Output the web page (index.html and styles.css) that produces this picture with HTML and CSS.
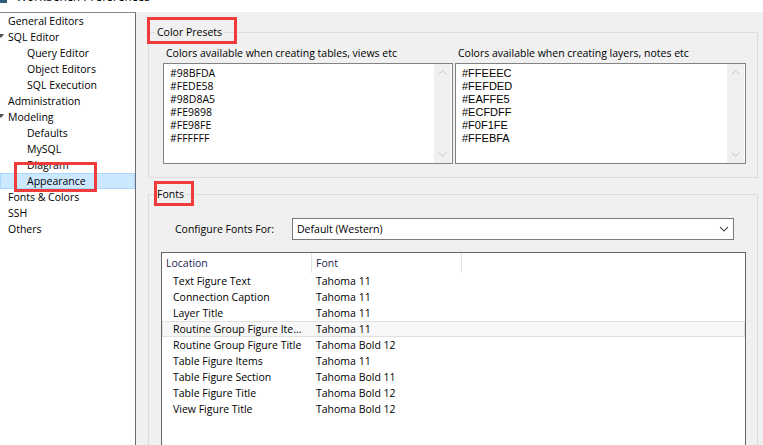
FILE: index.html
```html
<!DOCTYPE html>
<html>
<head>
<meta charset="utf-8">
<title>Workbench Preferences</title>
<link rel="stylesheet" href="styles.css">
</head>
<body>
<div class="titlebar">
  <span class="app-icon"></span>
  <span class="title">Workbench Preferences</span>
</div>
<div class="main">
  <nav class="sidebar">
    <div class="item">General Editors</div>
    <div class="item open"><span class="exp"></span>SQL Editor</div>
    <div class="item l1">Query Editor</div>
    <div class="item l1">Object Editors</div>
    <div class="item l1">SQL Execution</div>
    <div class="item">Administration</div>
    <div class="item open"><span class="exp"></span>Modeling</div>
    <div class="item l1">Defaults</div>
    <div class="item l1">MySQL</div>
    <div class="item l1">Diagram</div>
    <div class="item l1 sel">Appearance</div>
    <div class="item">Fonts &amp; Colors</div>
    <div class="item">SSH</div>
    <div class="item">Others</div>
  </nav>
  <div class="content">
    <fieldset class="group presets">
      <legend>Color Presets</legend>
      <div class="presets-inner">
        <div class="col col-a">
          <div class="col-label">Colors available when creating tables, views etc</div>
          <div class="listbox">
            <div class="lines">
              <div>#98BFDA</div>
              <div>#FEDE58</div>
              <div>#98D8A5</div>
              <div>#FE9898</div>
              <div>#FE98FE</div>
              <div>#FFFFFF</div>
            </div>
            <div class="vscroll">
              <svg class="sarrow" width="9" height="5" viewBox="0 0 9 5"><path d="M0.5 4.5 L4.5 0.8 L8.5 4.5" fill="none" stroke="#c4c4c4" stroke-width="1"/></svg>
              <svg class="sarrow" width="9" height="5" viewBox="0 0 9 5"><path d="M0.5 0.5 L4.5 4.2 L8.5 0.5" fill="none" stroke="#c4c4c4" stroke-width="1"/></svg>
            </div>
          </div>
        </div>
        <div class="col col-b">
          <div class="col-label">Colors available when creating layers, notes etc</div>
          <div class="listbox">
            <div class="lines narrow">
              <div>#FFEEEC</div>
              <div>#FEFDED</div>
              <div>#EAFFE5</div>
              <div>#ECFDFF</div>
              <div>#F0F1FE</div>
              <div>#FFEBFA</div>
            </div>
            <div class="vscroll">
              <svg class="sarrow" width="9" height="5" viewBox="0 0 9 5"><path d="M0.5 4.5 L4.5 0.8 L8.5 4.5" fill="none" stroke="#c4c4c4" stroke-width="1"/></svg>
              <svg class="sarrow" width="9" height="5" viewBox="0 0 9 5"><path d="M0.5 0.5 L4.5 4.2 L8.5 0.5" fill="none" stroke="#c4c4c4" stroke-width="1"/></svg>
            </div>
          </div>
        </div>
      </div>
    </fieldset>
    <fieldset class="group fonts">
      <legend>Fonts</legend>
      <div class="fonts-inner">
        <div class="cfg-row">
          <span class="cfg-label">Configure Fonts For:</span>
          <div class="combo">
            <span class="combo-text">Default (Western)</span>
            <svg class="combo-arrow" width="10" height="6" viewBox="0 0 10 6"><path d="M1 1 L5 5 L9 1" fill="none" stroke="#555" stroke-width="1.1"/></svg>
          </div>
        </div>
        <div class="table">
          <div class="thead">
            <div class="th c1">Location</div>
            <div class="th c2">Font</div>
          </div>
          <div class="tr"><div class="c1">Text Figure Text</div><div class="c2">Tahoma 11</div></div>
          <div class="tr"><div class="c1">Connection Caption</div><div class="c2">Tahoma 11</div></div>
          <div class="tr"><div class="c1">Layer Title</div><div class="c2">Tahoma 11</div></div>
          <div class="tr hot"><div class="c1">Routine Group Figure Ite...</div><div class="c2">Tahoma 11</div></div>
          <div class="tr"><div class="c1">Routine Group Figure Title</div><div class="c2">Tahoma Bold 12</div></div>
          <div class="tr"><div class="c1">Table Figure Items</div><div class="c2">Tahoma 11</div></div>
          <div class="tr"><div class="c1">Table Figure Section</div><div class="c2">Tahoma Bold 11</div></div>
          <div class="tr"><div class="c1">Table Figure Title</div><div class="c2">Tahoma Bold 12</div></div>
          <div class="tr"><div class="c1">View Figure Title</div><div class="c2">Tahoma Bold 12</div></div>
        </div>
      </div>
    </fieldset>
  </div>
</div>
<div class="mark mark-presets"></div>
<div class="mark mark-fonts"></div>
<div class="mark mark-appearance"></div>
</body>
</html>
```
FILE: styles.css
```css
html, body {
  margin: 0;
  padding: 0;
}
body {
  width: 763px;
  height: 445px;
  overflow: hidden;
  position: relative;
  background: #f0f0f0;
  font-family: "Open Sans", "Liberation Sans", sans-serif;
  font-size: 10.5px;
  color: #000;
}

/* title bar (cropped at the top of the shot) */
.titlebar {
  height: 12px;
  background: #fff;
  overflow: hidden;
  display: flex;
  align-items: flex-start;
}
.app-icon {
  width: 7px;
  height: 14px;
  margin-top: -11px;
  background: #2f5a78;
}
.title {
  margin-left: 9px;
  margin-top: -10px;
  font-size: 12px;
  line-height: 14px;
  color: #000;
}

.main {
  display: flex;
  height: 433px;
  overflow: hidden;
}

/* left tree */
.sidebar {
  width: 135px;
  flex: none;
  background: #fff;
  border-right: 1px solid #6e6e6e;
  border-top: 1px solid #8a8a8a;
}
.item {
  position: relative;
  height: 16px;
  line-height: 16px;
  padding-left: 8px;
  white-space: nowrap;
}
.item.l1 {
  padding-left: 27px;
}
.item.sel {
  background: #cce8ff;
  box-shadow: inset 0 0 0 1px #a8d8ff;
}
.exp {
  position: absolute;
  left: -2px;
  top: 5px;
  width: 0;
  height: 0;
  border-left: 3px solid transparent;
  border-right: 3px solid transparent;
  border-top: 4px solid #505050;
}

/* right content */
.content {
  flex: 1;
  min-width: 0;
  overflow: hidden;
  display: flex;
  flex-direction: column;
  padding: 0 5px 0 12px;
}
.group {
  margin: 0;
  padding: 0;
  min-width: 0;
  border: 1px solid #dcdcdc;
}
.group legend {
  margin-left: 6px;
  padding: 0 2px;
  line-height: 14px;
  font-size: 10.5px;
}
.presets {
  margin-top: 13px;
  flex: none;
}
.presets-inner {
  display: flex;
  gap: 2px;
  padding: 7px 11px 13px 14px;
}
.col-a { width: 290px; }
.col-b { width: 291px; }
.col-label {
  height: 14px;
  line-height: 14px;
  padding-left: 3px;
  margin-bottom: 3px;
  white-space: nowrap;
}
.listbox {
  height: 99px;
  border: 1px solid #828282;
  background: #fff;
  display: flex;
}
.lines {
  flex: 1;
  padding: 3px 0 0 6px;
  line-height: 13px;
}
.lines.narrow {
  font-family: "Liberation Sans Narrow", "Liberation Sans", sans-serif;
  font-size: 11px;
}
.vscroll {
  width: 17px;
  margin-right: 1px;
  background: #f0f0f0;
  display: flex;
  flex-direction: column;
  justify-content: space-between;
  align-items: center;
  padding: 6px 0 6px;
}
.sarrow {
  display: block;
}

.fonts {
  margin-top: 9px;
  flex: none;
  height: 260px;
  border-bottom: none;
}
.fonts-inner {
  padding: 17px 11px 0 12px;
}
.cfg-row {
  display: flex;
  align-items: center;
  height: 22px;
  padding: 0 12px 0 14px;
}
.cfg-label {
  width: 117px;
  flex: none;
  white-space: nowrap;
}
.combo {
  flex: 1;
  height: 22px;
  box-sizing: border-box;
  border: 1px solid #7a7a7a;
  background: #fff;
  display: flex;
  align-items: center;
  padding: 0 4px 0 4px;
}
.combo-text {
  flex: 1;
}
.table {
  margin-top: 12px;
  height: 200px;
  border: 1px solid #646464;
  background: #fff;
}
.thead {
  display: flex;
  height: 20px;
  line-height: 20px;
  color: #1c1c4c;
}
.th {
  box-sizing: border-box;
  border-right: 1px solid #e3e3e3;
  padding-left: 4px;
  white-space: nowrap;
}
.th.c1 { width: 150px; }
.th.c2 { width: 150px; }
.tr {
  display: flex;
  height: 16px;
  line-height: 16px;
  white-space: nowrap;
}
.tr .c1 {
  width: 150px;
  flex: none;
  box-sizing: border-box;
  padding-left: 11px;
  overflow: hidden;
}
.tr .c2 {
  padding-left: 4px;
}
.tr.hot {
  background: #f7f7f7;
  box-shadow: inset 0 0 0 1px #e0e0e0;
}

/* red annotation rectangles drawn over the screenshot */
.mark {
  position: absolute;
  box-sizing: border-box;
  border: 3px solid #ee3b3b;
}
.mark-presets {
  left: 147px;
  top: 17px;
  width: 90px;
  height: 27px;
}
.mark-fonts {
  left: 154px;
  top: 181px;
  width: 40px;
  height: 25px;
}
.mark-appearance {
  left: 14px;
  top: 162px;
  width: 83px;
  height: 30px;
}
```
